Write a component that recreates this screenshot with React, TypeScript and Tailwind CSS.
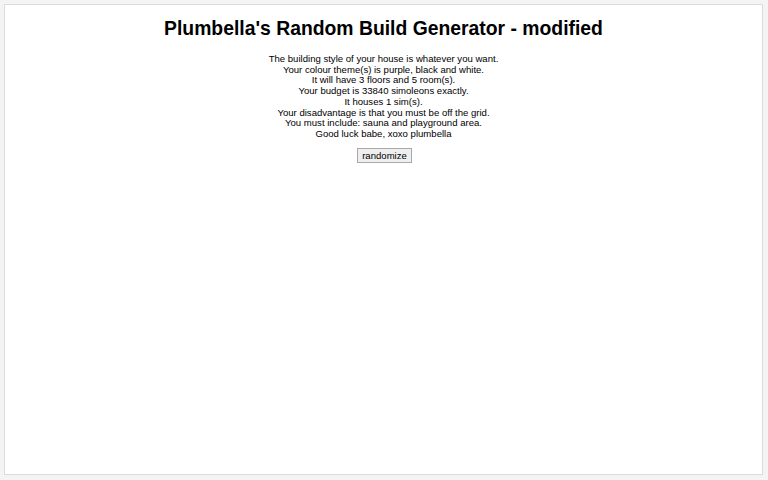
const lines = [
  "The building style of your house is whatever you want.",
  "Your colour theme(s) is purple, black and white.",
  "It will have 3 floors and 5 room(s).",
  "Your budget is 33840 simoleons exactly.",
  "It houses 1 sim(s).",
  "Your disadvantage is that you must be off the grid.",
  "You must include: sauna and playground area.",
  "Good luck babe, xoxo plumbella",
];

export default function App() {
  return (
    <div className="h-[480px] w-[768px] bg-[#f4f4f4] p-[4px_5px_5px_4px] font-['Liberation_Sans',Arial,sans-serif] text-black">
      <div className="flex h-full flex-col items-center border border-[#dcdcdc] bg-white">
        <h1 className="mt-[11px] text-[19.35px] leading-[24px] font-bold">
          Plumbella's Random Build Generator - modified
        </h1>
        <div className="mt-[14px] flex flex-col items-center text-[9.57px] leading-[10.7px]">
          {lines.map((line) => (
            <p key={line}>{line}</p>
          ))}
        </div>
        <button className="mt-[8px] ml-[2px] h-[15px] border border-[#a9a9a9] bg-[#efefef] px-[4px] text-[9.57px] leading-[13px]">
          randomize
        </button>
      </div>
    </div>
  );
}
